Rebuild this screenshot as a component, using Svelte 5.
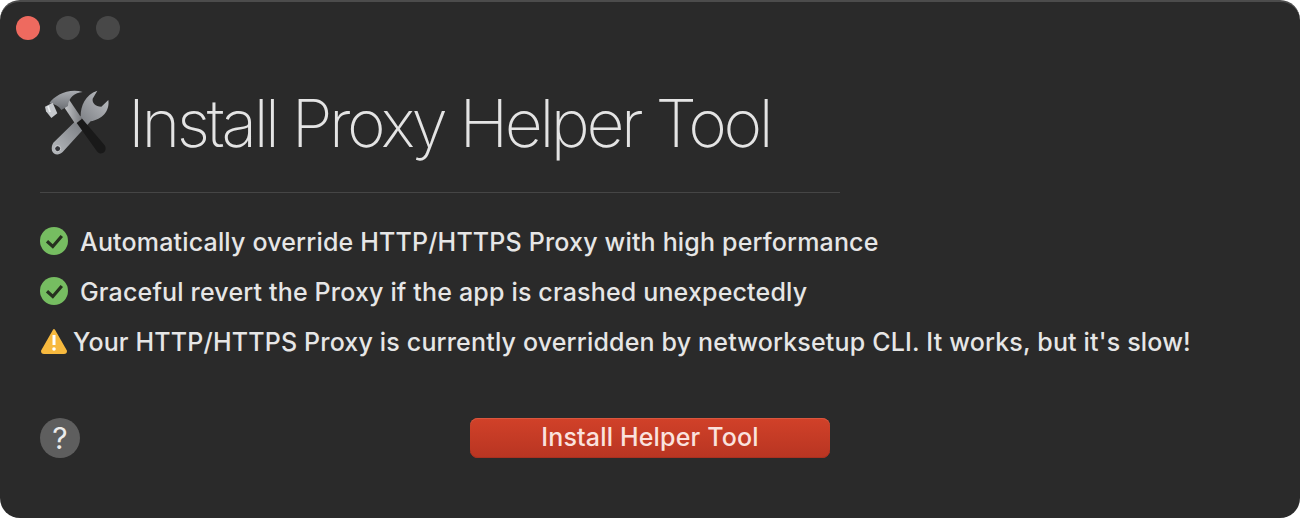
<script>
	const features = [
		'Automatically override HTTP/HTTPS Proxy with high performance',
		'Graceful revert the Proxy if the app is crashed unexpectedly'
	];
</script>

<style>
	:global(body) {
		background: #fff;
	}

	.window {
		box-sizing: border-box;
		width: 1300px;
		height: 518px;
		background: #2a2a2a;
		border-radius: 20px;
		border-top: 2px solid #4c4c4c;
		padding: 14px 40px 0;
		font-family: Inter, "Liberation Sans", sans-serif;
		color: #e6e6e6;
	}

	.lights {
		display: flex;
		gap: 16px;
		margin-left: -24px;
	}

	.light {
		width: 24px;
		height: 24px;
		border-radius: 50%;
		background: #484848;
	}

	.light.close {
		background: #ee6a5f;
	}

	h1 {
		display: flex;
		align-items: center;
		gap: 14px;
		margin: 40px 0 0;
		font-size: 66px;
		line-height: 80px;
		font-weight: 200;
		letter-spacing: -3.4px;
		color: #e4e4e4;
		height: 86px;
	}

	.rule {
		width: 800px;
		height: 1px;
		background: #454545;
		margin-top: 26px;
		margin-bottom: 23px;
	}

	.row {
		display: flex;
		align-items: center;
		gap: 12px;
		height: 50px;
		font-size: 25px;
		font-weight: 450;
		letter-spacing: 0.17px;
	}

	.row span {
		position: relative;
		top: 1px;
	}

	.warn {
		gap: 5px;
	}

	.footer {
		display: flex;
		align-items: center;
		margin-top: 52px;
	}

	.help {
		width: 40px;
		height: 40px;
		border-radius: 50%;
		background: #5e5e5e;
		color: #ececec;
		font-size: 30px;
		font-weight: 400;
		text-align: center;
		line-height: 40px;
	}

	button {
		box-sizing: border-box;
		width: 360px;
		height: 40px;
		margin-left: 390px;
		border: none;
		border-radius: 8px;
		background: linear-gradient(#d14129, #b83522);
		box-shadow: inset 0 1px 0 #d9563e, inset 0 -1px 0 #a83020;
		color: #fae2de;
		font-family: inherit;
		font-size: 25px;
		font-weight: 450;
		letter-spacing: 0.17px;
		padding: 0 0 2px;
	}
</style>

<div class="window">
	<div class="lights">
		<span class="light close"></span>
		<span class="light"></span>
		<span class="light"></span>
	</div>

	<h1>
		<svg width="74" height="74" viewBox="0 0 222 222">
			<defs>
				<linearGradient id="steel" x1="0" y1="1" x2="1" y2="0">
					<stop offset="0" stop-color="#b9bcc0" />
					<stop offset="0.5" stop-color="#7c7f84" />
					<stop offset="1" stop-color="#c0c2c6" />
				</linearGradient>
				<linearGradient id="head" x1="0" y1="0" x2="0" y2="1">
					<stop offset="0" stop-color="#aaadb2" />
					<stop offset="1" stop-color="#6a6d72" />
				</linearGradient>
				<linearGradient id="neck" x1="0" y1="0" x2="1" y2="0">
					<stop offset="0" stop-color="#d0d2d5" />
					<stop offset="1" stop-color="#77797d" />
				</linearGradient>
			</defs>
			<!-- wrench -->
			<path d="M40 170 L122 90 C122 60 135 26 172 14 L158 38 C156 50 166 62 184 62 L205 42 C210 76 186 100 152 106 L68 198 C56 210 40 206 36 194 C34 184 36 176 40 170Z" fill="url(#steel)" />
			<circle cx="53" cy="188" r="9" fill="#34353a" stroke="#d4d6d9" stroke-width="3" />
			<!-- hammer -->
			<path d="M108 108 L124 95 L194 178 C200 188 196 200 186 202 C178 204 172 198 168 192Z" fill="#191919" />
			<path d="M66 54 L88 42 L126 98 L106 114Z" fill="url(#neck)" />
			<path d="M28 52 C44 28 86 6 128 18 C104 20 86 34 84 60 L64 72 C58 62 44 54 28 52Z" fill="url(#head)" />
			<path d="M15 62 L38 50 L52 82 L34 96 L18 76Z" fill="#c6c9cd" />
			<path d="M24 60 L30 78" stroke="#eef0f2" stroke-width="5" />
		</svg>
		<span>Install Proxy Helper Tool</span>
	</h1>

	<div class="rule"></div>

	{#each features as feature}
		<div class="row">
			<svg width="28" height="28" viewBox="0 0 28 28">
				<circle cx="14" cy="14" r="14" fill="#76bd61" />
				<path d="M7 14.2 L12.8 19.5 L21.8 9" fill="none" stroke="#26301f" stroke-width="3.2" />
			</svg>
			<span>{feature}</span>
		</div>
	{/each}

	<div class="row warn">
		<svg width="28" height="26" viewBox="0 0 28 26">
			<path d="M14 2 L26 23 Q26 25 24 25 L4 25 Q2 25 2 23Z" fill="#f7b93e" stroke="#f7b93e" stroke-width="2" stroke-linejoin="round" />
			<path d="M14 7 V17" stroke="#fff" stroke-width="3" />
			<circle cx="14" cy="21" r="1.8" fill="#fff" />
		</svg>
		<span>Your HTTP/HTTPS Proxy is currently overridden by networksetup CLI. It works, but it's slow!</span>
	</div>

	<div class="footer">
		<div class="help">?</div>
		<button>Install Helper Tool</button>
	</div>
</div>
